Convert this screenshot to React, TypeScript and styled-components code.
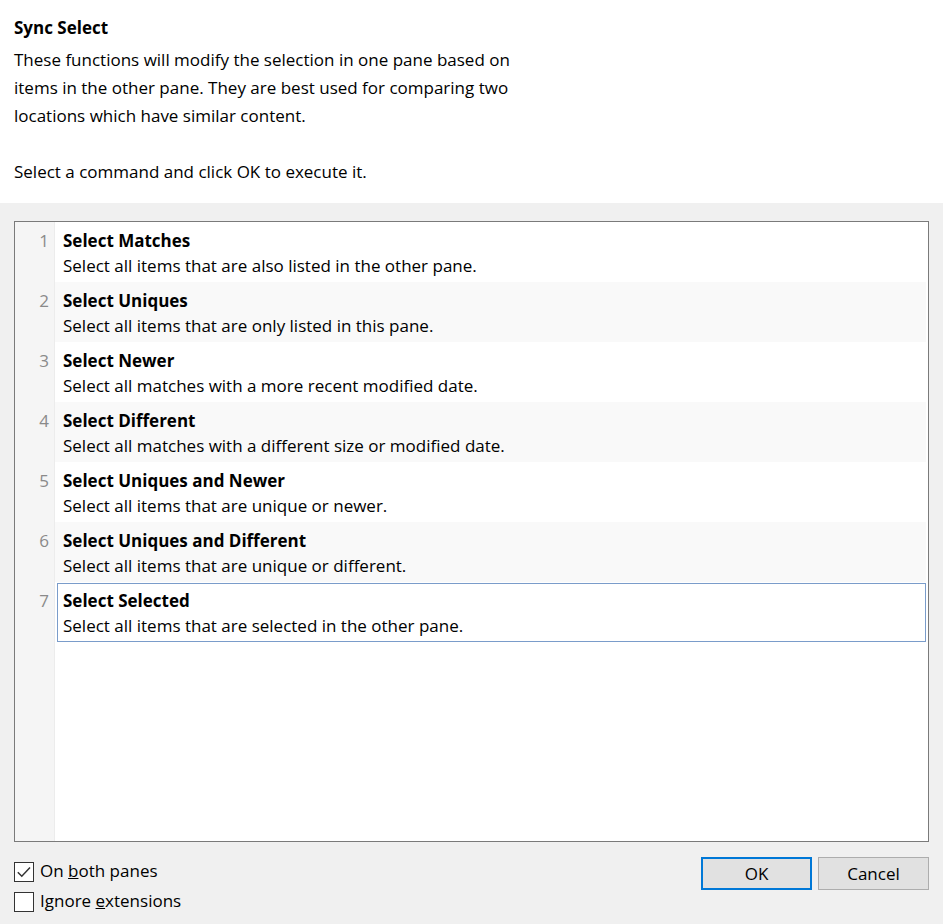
import React from "react";
import styled, { createGlobalStyle } from "styled-components";

const GlobalStyle = createGlobalStyle`
  html, body {
    margin: 0;
    padding: 0;
    background: #f0f0f0;
  }
  body {
    font-family: "Open Sans", "Noto Sans", sans-serif;
    color: #000;
  }
`;

type Command = { title: string; desc: string };

const commands: Command[] = [
  { title: "Select Matches", desc: "Select all items that are also listed in the other pane." },
  { title: "Select Uniques", desc: "Select all items that are only listed in this pane." },
  { title: "Select Newer", desc: "Select all matches with a more recent modified date." },
  { title: "Select Different", desc: "Select all matches with a different size or modified date." },
  { title: "Select Uniques and Newer", desc: "Select all items that are unique or newer." },
  { title: "Select Uniques and Different", desc: "Select all items that are unique or different." },
  { title: "Select Selected", desc: "Select all items that are selected in the other pane." },
];

const App = () => {
  const selected = 6;
  return (
    <>
      <GlobalStyle />
      <Dialog>
        <Header>
          <Title>Sync Select</Title>
          <Para>
            These functions will modify the selection in one pane based on
            <br />
            items in the other pane. They are best used for comparing two
            <br />
            locations which have similar content.
          </Para>
          <Para>Select a command and click OK to execute it.</Para>
        </Header>
        <Body>
          <ListBox>
            <Gutter>
              {commands.map((c, i) => (
                <Num key={c.title}>{i + 1}</Num>
              ))}
            </Gutter>
            <Rows>
              {commands.map((c, i) => (
                <Row key={c.title} $striped={i % 2 === 1} $selected={i === selected}>
                  <RowTitle>{c.title}</RowTitle>
                  <RowDesc>{c.desc}</RowDesc>
                </Row>
              ))}
            </Rows>
          </ListBox>
          <Footer>
            <Options>
              <CheckRow>
                <Box>
                  <svg width="18" height="18" viewBox="0 0 18 18">
                    <path d="M2.8 9.2 L6.8 13.2 L15 4.6" fill="none" stroke="#333" strokeWidth="1.5" />
                  </svg>
                </Box>
                <Label>
                  On <U>b</U>oth panes
                </Label>
              </CheckRow>
              <CheckRow>
                <Box />
                <Label>
                  Ignore <U>e</U>xtensions
                </Label>
              </CheckRow>
            </Options>
            <Buttons>
              <Button $primary>OK</Button>
              <Button>Cancel</Button>
            </Buttons>
          </Footer>
        </Body>
      </Dialog>
    </>
  );
};

export default App;

const Dialog = styled.div`
  width: 943px;
  height: 924px;
  display: flex;
  flex-direction: column;
  background: #f0f0f0;
  font-size: 17px;
`;

const Header = styled.div`
  background: #fff;
  height: 203px;
  box-sizing: border-box;
  padding: 14px 14px 0;
`;

const Title = styled.div`
  font-weight: 700;
  font-size: 17px;
  line-height: 28px;
  margin-bottom: 4px;
`;

const Para = styled.p`
  margin: 0 0 28px;
  line-height: 28px;
`;

const Body = styled.div`
  flex: 1;
  display: flex;
  flex-direction: column;
  padding: 18px 14px 0;
`;

const ListBox = styled.div`
  height: 621px;
  box-sizing: border-box;
  border: 1px solid #7a7a7a;
  background: #fff;
  display: flex;
`;

const Gutter = styled.div`
  width: 39px;
  background: #f5f5f5;
  border-right: 1px solid #ececec;
  display: flex;
  flex-direction: column;
`;

const Num = styled.div`
  height: 60px;
  box-sizing: border-box;
  padding: 6px 5px 0 0;
  text-align: right;
  color: #8a8a8a;
  line-height: 26px;
`;

const Rows = styled.div`
  flex: 1;
  padding-right: 2px;
  display: flex;
  flex-direction: column;
`;

const Row = styled.div<{ $striped?: boolean; $selected?: boolean }>`
  height: 60px;
  box-sizing: border-box;
  padding: 6px 0 0 ${(p) => (p.$selected ? "5px" : "8px")};
  background: ${(p) => (p.$striped ? "#f9f9f9" : "#fff")};
  ${(p) =>
    p.$selected &&
    `
    margin: 1px 0 0 2px;
    height: 59px;
    padding-top: 4px;
    border: 1px solid #7a9cca;
    background: #fff;
  `}
`;

const RowTitle = styled.div`
  font-weight: 700;
  line-height: 25px;
`;

const RowDesc = styled.div`
  line-height: 25px;
`;

const Footer = styled.div`
  display: flex;
  justify-content: space-between;
  padding-top: 15px;
`;

const Options = styled.div`
  display: flex;
  flex-direction: column;
  gap: 6px;
  padding-top: 3px;
`;

const CheckRow = styled.div`
  display: flex;
  align-items: center;
  gap: 6px;
  height: 24px;
`;

const Label = styled.span`
  line-height: 24px;
  margin-top: -2px;
`;

const Box = styled.div`
  width: 20px;
  height: 20px;
  box-sizing: border-box;
  border: 1px solid #333;
  background: #fff;
  display: flex;
  align-items: center;
  justify-content: center;
`;

const U = styled.span`
  text-decoration: underline;
`;

const Buttons = styled.div`
  display: flex;
  gap: 6px;
`;

const Button = styled.button<{ $primary?: boolean }>`
  width: 111px;
  height: 33px;
  box-sizing: border-box;
  background: #e1e1e1;
  border: ${(p) => (p.$primary ? "2px solid #0078d7" : "1px solid #adadad")};
  font-family: inherit;
  font-size: 17px;
  color: #000;
  padding: 0;
`;
